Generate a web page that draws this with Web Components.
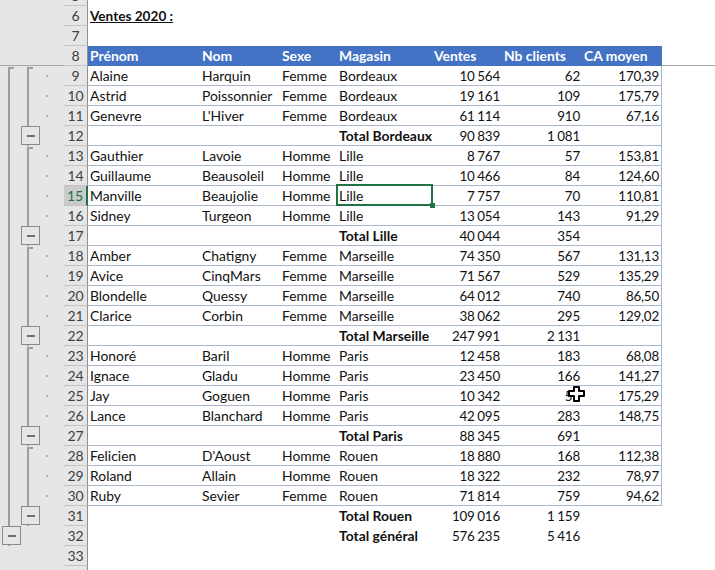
<!DOCTYPE html>
<html lang="fr">
<head>
<meta charset="utf-8">
<title>Ventes 2020</title>
<style>
  html, body { margin: 0; height: 570px; overflow: hidden; background: #fff; }
</style>
</head>
<body>
<xl-sheet></xl-sheet>
<script>
const FIRST_ROW = 5;
const LAST_ROW = 34;
const GROUPS = [[9, 11], [13, 16], [18, 21], [23, 26], [28, 30]];
const SELECTED_ROW = 15;

const HEAD = ['Prénom', 'Nom', 'Sexe', 'Magasin', 'Ventes', 'Nb clients', 'CA moyen'];

// row number -> cells; a string row is a total line (store, sales, clients)
const ROWS = {
    9: ['Alaine', 'Harquin', 'Femme', 'Bordeaux', '10 564', '62', '170,39'],
    10: ['Astrid', 'Poissonnier', 'Femme', 'Bordeaux', '19 161', '109', '175,79'],
    11: ['Genevre', "L'Hiver", 'Femme', 'Bordeaux', '61 114', '910', '67,16'],
    12: 'Total Bordeaux|90 839|1 081',
    13: ['Gauthier', 'Lavoie', 'Homme', 'Lille', '8 767', '57', '153,81'],
    14: ['Guillaume', 'Beausoleil', 'Homme', 'Lille', '10 466', '84', '124,60'],
    15: ['Manville', 'Beaujolie', 'Homme', 'Lille', '7 757', '70', '110,81'],
    16: ['Sidney', 'Turgeon', 'Homme', 'Lille', '13 054', '143', '91,29'],
    17: 'Total Lille|40 044|354',
    18: ['Amber', 'Chatigny', 'Femme', 'Marseille', '74 350', '567', '131,13'],
    19: ['Avice', 'CinqMars', 'Femme', 'Marseille', '71 567', '529', '135,29'],
    20: ['Blondelle', 'Quessy', 'Femme', 'Marseille', '64 012', '740', '86,50'],
    21: ['Clarice', 'Corbin', 'Femme', 'Marseille', '38 062', '295', '129,02'],
    22: 'Total Marseille|247 991|2 131',
    23: ['Honoré', 'Baril', 'Homme', 'Paris', '12 458', '183', '68,08'],
    24: ['Ignace', 'Gladu', 'Homme', 'Paris', '23 450', '166', '141,27'],
    25: ['Jay', 'Goguen', 'Homme', 'Paris', '10 342', '59', '175,29'],
    26: ['Lance', 'Blanchard', 'Homme', 'Paris', '42 095', '283', '148,75'],
    27: 'Total Paris|88 345|691',
    28: ['Felicien', "D'Aoust", 'Homme', 'Rouen', '18 880', '168', '112,38'],
    29: ['Roland', 'Allain', 'Homme', 'Rouen', '18 322', '232', '78,97'],
    30: ['Ruby', 'Sevier', 'Femme', 'Rouen', '71 814', '759', '94,62'],
};
const GRAND_TOTALS = {
    31: 'Total Rouen|109 016|1 159',
    32: 'Total général|576 235|5 416',
};

class XlCell extends HTMLElement {
    constructor() {
        super();
        this.attachShadow({ mode: 'open' });
        this.shadowRoot.innerHTML = `
            <style>
                :host {
                    display: block;
                    position: relative;
                    box-sizing: border-box;
                    height: 20px;
                    padding: 0 2px;
                    line-height: 20px;
                    white-space: nowrap;
                    background: var(--cell-bg, transparent);
                    border-bottom: var(--cell-line, none);
                }
                :host([num]) {
                    text-align: right;
                    font-size: 13.4px;
                    letter-spacing: -0.2px;
                    word-spacing: -0.6px;
                }
                :host([last]) { border-right: var(--cell-line, none); }
                :host([strong]) { font-weight: 700; }
                :host([title-cell]) { font-size: 13.6px; font-weight: 700; text-decoration: underline; }
                :host([selected])::after {
                    content: '';
                    position: absolute;
                    left: -1px;
                    top: -2px;
                    right: -1px;
                    bottom: -1px;
                    border: 2px solid #217346;
                }
                i {
                    display: none;
                    position: absolute;
                    right: -3px;
                    bottom: -3px;
                    width: 5px;
                    height: 5px;
                    background: #217346;
                    z-index: 1;
                }
                :host([selected]) i { display: block; }
            </style>
            <slot></slot><i></i>
        `;
    }
}

class XlRow extends HTMLElement {
    constructor() {
        super();
        this.attachShadow({ mode: 'open' });
        this.shadowRoot.innerHTML = `
            <style>
                :host {
                    display: grid;
                    grid-template-columns: 24px 112px 80px 57px 95px 70px 80px 80px 1fr;
                    height: 20px;
                }
                :host([kind=data]) { --cell-line: 1px solid #a9b7cf; }
                :host([kind=head]) {
                    --cell-bg: #4472c4;
                    --cell-line: 1px solid #4472c4;
                    color: #fff;
                    font-weight: 700;
                }
                .num {
                    box-sizing: border-box;
                    height: 20px;
                    background: #e6e6e6;
                    border-right: 1px solid #8f8f8f;
                    border-bottom: 1px solid #c4c4c4;
                    color: #3f3f3f;
                    font-size: 14px;
                    font-weight: 400;
                    line-height: 20px;
                    text-align: center;
                }
                :host([active]) .num {
                    background: #cbcbcb;
                    color: #217346;
                    border-right: 2px solid #217346;
                }
                .rest { grid-column: 9; height: 20px; box-sizing: border-box; }
                :host([kind=head]) .rest { border-bottom: 1px solid #a6a6a6; }
            </style>
            <div class="num"></div>
            <slot></slot>
            <div class="rest"></div>
        `;
    }

    connectedCallback() {
        this.shadowRoot.querySelector('.num').textContent = this.getAttribute('num');
    }
}

class XlOutline extends HTMLElement {
    constructor() {
        super();
        this.attachShadow({ mode: 'open' });
        const line = n => n - FIRST_ROW + 1;
        let parts = `<div class="headline" style="grid-row:${line(8)}"></div>`;
        GROUPS.forEach(([from, to]) => {
            parts += `<div class="bracket" style="grid-column:2;grid-row:${line(from)}/${line(to + 1) + 1}"></div>`;
            parts += `<div class="toggle" style="grid-column:2;grid-row:${line(to + 1)}"></div>`;
            for (let r = from; r <= to; r++) {
                parts += `<div class="dot" style="grid-row:${line(r)}"></div>`;
            }
        });
        parts += `<div class="bracket" style="grid-column:1;grid-row:${line(9)}/${line(32) + 1}"></div>`;
        parts += `<div class="toggle" style="grid-column:1;grid-row:${line(32)}"></div>`;
        this.shadowRoot.innerHTML = `
            <style>
                :host {
                    display: grid;
                    flex: none;
                    width: 64px;
                    grid-template-columns: 19px 19px 26px;
                    grid-auto-rows: 20px;
                    align-content: start;
                    background: #e6e6e6;
                }
                .headline {
                    grid-column: 1 / -1;
                    box-sizing: border-box;
                    border-bottom: 1px solid #a6a6a6;
                }
                .bracket {
                    width: 6px;
                    height: 2px;
                    margin: 1px 0 0 8px;
                    background: #9d9d9d;
                    align-self: start;
                }
                .bracket::after {
                    content: '';
                    display: block;
                    width: 2px;
                    height: var(--len, 100%);
                    background: #9d9d9d;
                }
                .toggle {
                    box-sizing: border-box;
                    width: 19px;
                    height: 19px;
                    margin-left: 2px;
                    background: #e6e6e6;
                    border: 1px solid #8c8c8c;
                    display: flex;
                    align-items: center;
                    justify-content: center;
                    z-index: 1;
                }
                .toggle::before {
                    content: '';
                    width: 8px;
                    height: 2px;
                    background: #6e6e6e;
                }
                .dot {
                    grid-column: 3;
                    width: 2px;
                    height: 2px;
                    margin: 9px 0 0 8px;
                    background: #b2b2b2;
                }
            </style>
            ${parts}
        `;
        this.shadowRoot.querySelectorAll('.bracket').forEach(b => {
            const [a, z] = b.style.gridRow.split('/').map(v => parseInt(v, 10));
            b.style.setProperty('--len', `${(z - a) * 20 - 1}px`);
        });
    }
}

class XlCursor extends HTMLElement {
    constructor() {
        super();
        this.attachShadow({ mode: 'open' });
        this.shadowRoot.innerHTML = `
            <style>
                :host { position: absolute; left: 568px; top: 386px; width: 17px; height: 16px; }
                svg { display: block; }
            </style>
            <svg width="17" height="16" viewBox="0 0 17 16">
                <path d="M6 1h5v4h5v5h-5v5H6v-5H1V5h5z" fill="#fff" stroke="#000" stroke-width="2" stroke-linejoin="round"/>
            </svg>
        `;
    }
}

class XlSheet extends HTMLElement {
    constructor() {
        super();
        this.attachShadow({ mode: 'open' });
        this.shadowRoot.innerHTML = `
            <style>
                :host {
                    display: flex;
                    position: relative;
                    height: 570px;
                    overflow: hidden;
                    font: 13.9px/20px Lato, "Liberation Sans", sans-serif;
                    color: #111;
                }
                .rows { flex: 1; margin-top: -14px; min-width: 0; }
                xl-outline { margin-top: -14px; }
            </style>
            <xl-outline></xl-outline>
            <div class="rows"><slot></slot></div>
            <xl-cursor></xl-cursor>
        `;
    }

    connectedCallback() {
        for (let n = FIRST_ROW; n <= LAST_ROW; n++) {
            this.appendChild(this.buildRow(n));
        }
    }

    buildRow(n) {
        const row = document.createElement('xl-row');
        row.setAttribute('num', n === LAST_ROW ? '' : n);
        if (n === SELECTED_ROW) row.setAttribute('active', '');

        if (n === 6) {
            this.addCell(row, 'Ventes 2020 :', { 'title-cell': '' });
        } else if (n === 8) {
            row.setAttribute('kind', 'head');
            HEAD.forEach((text, i) => this.addCell(row, text, i === 6 ? { last: '' } : {}));
        } else if (ROWS[n] && Array.isArray(ROWS[n])) {
            row.setAttribute('kind', 'data');
            ROWS[n].forEach((text, i) => {
                const attrs = {};
                if (i >= 4) attrs.num = '';
                if (i === 6) attrs.last = '';
                if (i === 3 && n === SELECTED_ROW) attrs.selected = '';
                this.addCell(row, text, attrs);
            });
        } else if (ROWS[n]) {
            row.setAttribute('kind', 'data');
            this.addTotal(row, ROWS[n]);
        } else if (GRAND_TOTALS[n]) {
            this.addTotal(row, GRAND_TOTALS[n]);
        }
        return row;
    }

    addTotal(row, line) {
        const [label, sales, clients] = line.split('|');
        ['', '', ''].forEach(t => this.addCell(row, t));
        this.addCell(row, label, { strong: '' });
        this.addCell(row, sales, { num: '' });
        this.addCell(row, clients, { num: '' });
        this.addCell(row, '', { last: '' });
    }

    addCell(row, text, attrs = {}) {
        const cell = document.createElement('xl-cell');
        cell.textContent = text;
        Object.keys(attrs).forEach(name => cell.setAttribute(name, attrs[name]));
        row.appendChild(cell);
    }
}

customElements.define('xl-cell', XlCell);
customElements.define('xl-row', XlRow);
customElements.define('xl-outline', XlOutline);
customElements.define('xl-cursor', XlCursor);
customElements.define('xl-sheet', XlSheet);
</script>
</body>
</html>
